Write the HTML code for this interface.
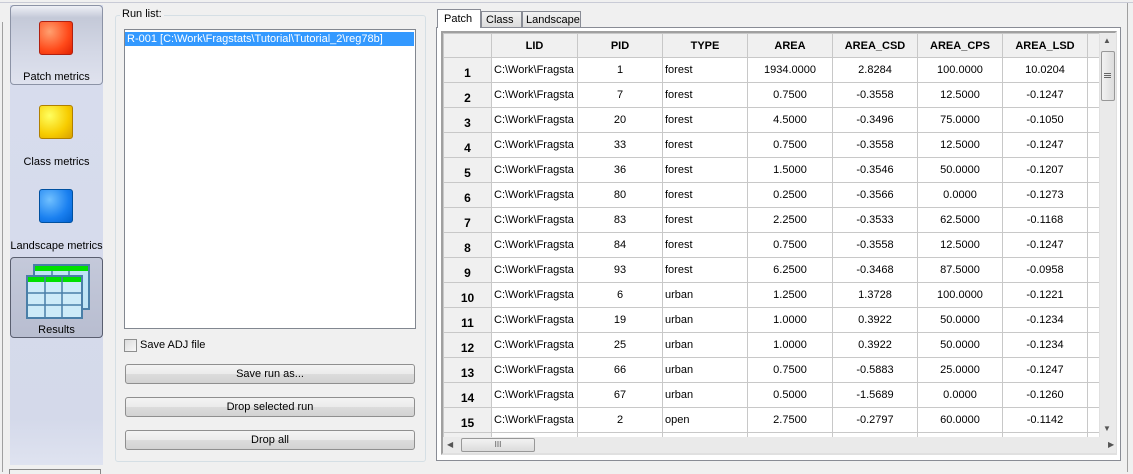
<!DOCTYPE html>
<html><head><meta charset="utf-8"><style>
*{box-sizing:border-box;margin:0;padding:0}
body{width:1133px;height:472px;overflow:hidden;background:#f0f0f0;font-family:"Liberation Sans","DejaVu Sans",sans-serif;font-size:11px;color:#000;position:relative}
.a{position:absolute}
.side{left:10px;top:5px;width:93px;height:460px;background:linear-gradient(#d8ddee,#d4d9ea 90%,#dfe3f0)}
.btn{position:absolute;left:0;width:93px;height:80px;border:1px solid #8c93a6;border-radius:4px}
.lbl{position:absolute;width:93px;text-align:center;font-size:11px;color:#000}
.sq{position:absolute;left:29px;width:34px;height:34px;border-radius:3px}
.pb{position:absolute;left:125px;width:290px;height:20px;border:1px solid #8f8f8f;border-radius:3px;background:linear-gradient(#f4f4f4,#ebebeb 50%,#dcdcdc 51%,#d2d2d2);text-align:center;line-height:18px;font-size:11px}
table{border-collapse:collapse;table-layout:fixed;position:absolute;left:0;top:0;width:674px}
td{border:1px solid #c8c8c8;height:25px;font-size:11px;white-space:nowrap;overflow:hidden;padding:0 2px;background:#fff}
td.h{background:#f0f0f0;font-weight:bold;text-align:center;font-size:12px;padding-top:6px}
tr.hd td{background:#f0f0f0;font-weight:bold;text-align:center;height:24px}
td.c{text-align:center}
</style></head><body>
<div class="a" style="left:0;top:2px;width:1133px;height:1px;background:#c9cbd6"></div>
<div class="a" style="left:2px;top:22px;width:1px;height:450px;background:#a0a0a0"></div>
<div class="a" style="left:1127px;top:3px;width:1px;height:469px;background:#a0a0a0"></div>
<div class="a side">
 <div class="btn" style="top:0;background:linear-gradient(#eef0f6,#c4c9d8 15%,#d4d8e6 60%,#dfe2ee)"></div>
 <div class="sq" style="top:16px;background:radial-gradient(circle at 30% 30%,#ffa070,#ff4a1a 60%,#e02000);border:1px solid #b02010"></div>
 <div class="lbl" style="top:66px">Patch metrics</div>
 <div class="sq" style="top:100px;background:radial-gradient(circle at 30% 30%,#ffff60,#f7cc00 60%,#d8a000);border:1px solid #b08000"></div>
 <div class="lbl" style="top:151px">Class metrics</div>
 <div class="sq" style="top:184px;background:radial-gradient(circle at 30% 30%,#70c0ff,#1a80f0 60%,#0060d0);border:1px solid #0050a0"></div>
 <div class="lbl" style="top:235px">Landscape metrics</div>
 <div class="btn" style="top:252px;height:81px;background:linear-gradient(#c4c9da,#b8bdd0);border-color:#5a5f70"></div>
 <svg class="a" style="left:16px;top:259px" width="64" height="56">
  <rect x="8" y="1" width="55" height="44" fill="#bfe4f5" stroke="#4a7fa8" stroke-width="2"/>
  <rect x="9" y="2" width="53" height="5" fill="#00e000"/>
  <path d="M26 7V45M43 7V45" stroke="#4a7fa8" stroke-width="1.5"/>
  <rect x="1" y="12" width="55" height="42" fill="#cdebf8" stroke="#4a7fa8" stroke-width="2"/>
  <rect x="2" y="13" width="53" height="5" fill="#00e000"/>
  <path d="M19 13V53M36 13V53M2 29H55M2 41H55" stroke="#4a7fa8" stroke-width="1.5"/>
 </svg>
 <div class="lbl" style="top:319px">Results</div>
</div>
<div class="a" style="left:9px;top:469px;width:92px;height:5px;border:1px solid #888;border-bottom:none"></div>
<div class="a" style="left:115px;top:15px;width:311px;height:447px;border:1px solid #d5dfe5;border-radius:3px"></div>
<div class="a" style="left:120px;top:8px;background:#f0f0f0;padding:0 2px">Run list:</div>
<div class="a" style="left:124px;top:29px;width:292px;height:300px;background:#fff;border:1px solid #828790"></div>
<div class="a" style="left:125px;top:32px;width:289px;height:14px;background:#3399ff;color:#fff;line-height:14px;padding-left:2px">R-001 [C:\Work\Fragstats\Tutorial\Tutorial_2\reg78b]</div>
<div class="a" style="left:124px;top:339px;width:13px;height:13px;border:1px solid #8e8f8f;background:linear-gradient(135deg,#dcdcdc,#f8f8f8)"></div>
<div class="a" style="left:140px;top:339px;font-size:11px">Save ADJ file</div>
<div class="pb" style="top:364px">Save run as...</div>
<div class="pb" style="top:397px">Drop selected run</div>
<div class="pb" style="top:430px">Drop all</div>
<div class="a" style="left:436px;top:27px;width:685px;height:434px;border:1px solid #898c95;background:#fff"></div>
<div class="a" style="left:437px;top:9px;width:44px;height:19px;border:1px solid #898c95;border-bottom:none;background:#fff;padding:3px 0 0 6px">Patch</div>
<div class="a" style="left:481px;top:11px;width:41px;height:17px;border:1px solid #898c95;background:linear-gradient(#f2f2f2,#dcdcdc);padding:2px 0 0 4px">Class</div>
<div class="a" style="left:522px;top:11px;width:59px;height:17px;border:1px solid #898c95;background:linear-gradient(#f2f2f2,#dcdcdc);padding:2px 0 0 3px;white-space:nowrap;overflow:hidden">Landscape</div>
<div class="a" style="left:441px;top:31px;width:676px;height:424px;border:2px solid #a0a0a0;border-right-color:#e0e0e0;border-bottom-color:#e0e0e0;background:#fff"></div>
<div class="a" style="left:443px;top:33px;width:656px;height:404px;overflow:hidden">
<table>
<colgroup><col style="width:48px"><col style="width:86px"><col style="width:85px"><col style="width:85px"><col style="width:85px"><col style="width:85px"><col style="width:85px"><col style="width:85px"><col style="width:30px"></colgroup>
<tr class="hd"><td></td><td>LID</td><td>PID</td><td>TYPE</td><td>AREA</td><td>AREA_CSD</td><td>AREA_CPS</td><td>AREA_LSD</td><td></td></tr>
<tr><td class="h">1</td><td>C:\Work\Fragsta</td><td class="c">1</td><td>forest</td><td class="c">1934.0000</td><td class="c">2.8284</td><td class="c">100.0000</td><td class="c">10.0204</td><td></td></tr>
<tr><td class="h">2</td><td>C:\Work\Fragsta</td><td class="c">7</td><td>forest</td><td class="c">0.7500</td><td class="c">-0.3558</td><td class="c">12.5000</td><td class="c">-0.1247</td><td></td></tr>
<tr><td class="h">3</td><td>C:\Work\Fragsta</td><td class="c">20</td><td>forest</td><td class="c">4.5000</td><td class="c">-0.3496</td><td class="c">75.0000</td><td class="c">-0.1050</td><td></td></tr>
<tr><td class="h">4</td><td>C:\Work\Fragsta</td><td class="c">33</td><td>forest</td><td class="c">0.7500</td><td class="c">-0.3558</td><td class="c">12.5000</td><td class="c">-0.1247</td><td></td></tr>
<tr><td class="h">5</td><td>C:\Work\Fragsta</td><td class="c">36</td><td>forest</td><td class="c">1.5000</td><td class="c">-0.3546</td><td class="c">50.0000</td><td class="c">-0.1207</td><td></td></tr>
<tr><td class="h">6</td><td>C:\Work\Fragsta</td><td class="c">80</td><td>forest</td><td class="c">0.2500</td><td class="c">-0.3566</td><td class="c">0.0000</td><td class="c">-0.1273</td><td></td></tr>
<tr><td class="h">7</td><td>C:\Work\Fragsta</td><td class="c">83</td><td>forest</td><td class="c">2.2500</td><td class="c">-0.3533</td><td class="c">62.5000</td><td class="c">-0.1168</td><td></td></tr>
<tr><td class="h">8</td><td>C:\Work\Fragsta</td><td class="c">84</td><td>forest</td><td class="c">0.7500</td><td class="c">-0.3558</td><td class="c">12.5000</td><td class="c">-0.1247</td><td></td></tr>
<tr><td class="h">9</td><td>C:\Work\Fragsta</td><td class="c">93</td><td>forest</td><td class="c">6.2500</td><td class="c">-0.3468</td><td class="c">87.5000</td><td class="c">-0.0958</td><td></td></tr>
<tr><td class="h">10</td><td>C:\Work\Fragsta</td><td class="c">6</td><td>urban</td><td class="c">1.2500</td><td class="c">1.3728</td><td class="c">100.0000</td><td class="c">-0.1221</td><td></td></tr>
<tr><td class="h">11</td><td>C:\Work\Fragsta</td><td class="c">19</td><td>urban</td><td class="c">1.0000</td><td class="c">0.3922</td><td class="c">50.0000</td><td class="c">-0.1234</td><td></td></tr>
<tr><td class="h">12</td><td>C:\Work\Fragsta</td><td class="c">25</td><td>urban</td><td class="c">1.0000</td><td class="c">0.3922</td><td class="c">50.0000</td><td class="c">-0.1234</td><td></td></tr>
<tr><td class="h">13</td><td>C:\Work\Fragsta</td><td class="c">66</td><td>urban</td><td class="c">0.7500</td><td class="c">-0.5883</td><td class="c">25.0000</td><td class="c">-0.1247</td><td></td></tr>
<tr><td class="h">14</td><td>C:\Work\Fragsta</td><td class="c">67</td><td>urban</td><td class="c">0.5000</td><td class="c">-1.5689</td><td class="c">0.0000</td><td class="c">-0.1260</td><td></td></tr>
<tr><td class="h">15</td><td>C:\Work\Fragsta</td><td class="c">2</td><td>open</td><td class="c">2.7500</td><td class="c">-0.2797</td><td class="c">60.0000</td><td class="c">-0.1142</td><td></td></tr>
<tr><td class="h">16</td><td>C:\Work\Fragsta</td><td class="c">4</td><td>open</td><td class="c">33.7500</td><td class="c">-0.7489</td><td class="c">93.3333</td><td class="c">-0.0052</td><td></td></tr>
</table>
</div>
<div class="a" style="left:1099px;top:33px;width:17px;height:404px;background:#eaeaea;border-left:1px solid #e0e0e0"></div>
<div class="a" style="left:1103px;top:36px;font-size:8px;color:#555">▲</div>
<div class="a" style="left:1101px;top:51px;width:14px;height:50px;border:1px solid #989898;border-radius:2px;background:linear-gradient(90deg,#f2f2f2,#dcdcdc)"></div>
<div class="a" style="left:1104px;top:73px;width:7px;height:5px;border-top:1px solid #666;border-bottom:1px solid #666"></div>
<div class="a" style="left:1104px;top:75px;width:7px;height:1px;background:#666"></div>
<div class="a" style="left:1103px;top:424px;font-size:8px;color:#555">▼</div>
<div class="a" style="left:443px;top:437px;width:673px;height:16px;background:#eaeaea"></div>
<div class="a" style="left:447px;top:440px;font-size:8px;color:#555">◀</div>
<div class="a" style="left:1108px;top:440px;font-size:8px;color:#555">▶</div>
<div class="a" style="left:461px;top:438px;width:74px;height:14px;border:1px solid #989898;border-radius:2px;background:linear-gradient(#f2f2f2,#dcdcdc);text-align:center;font-size:8px;line-height:12px;color:#555">III</div>
</body></html>
